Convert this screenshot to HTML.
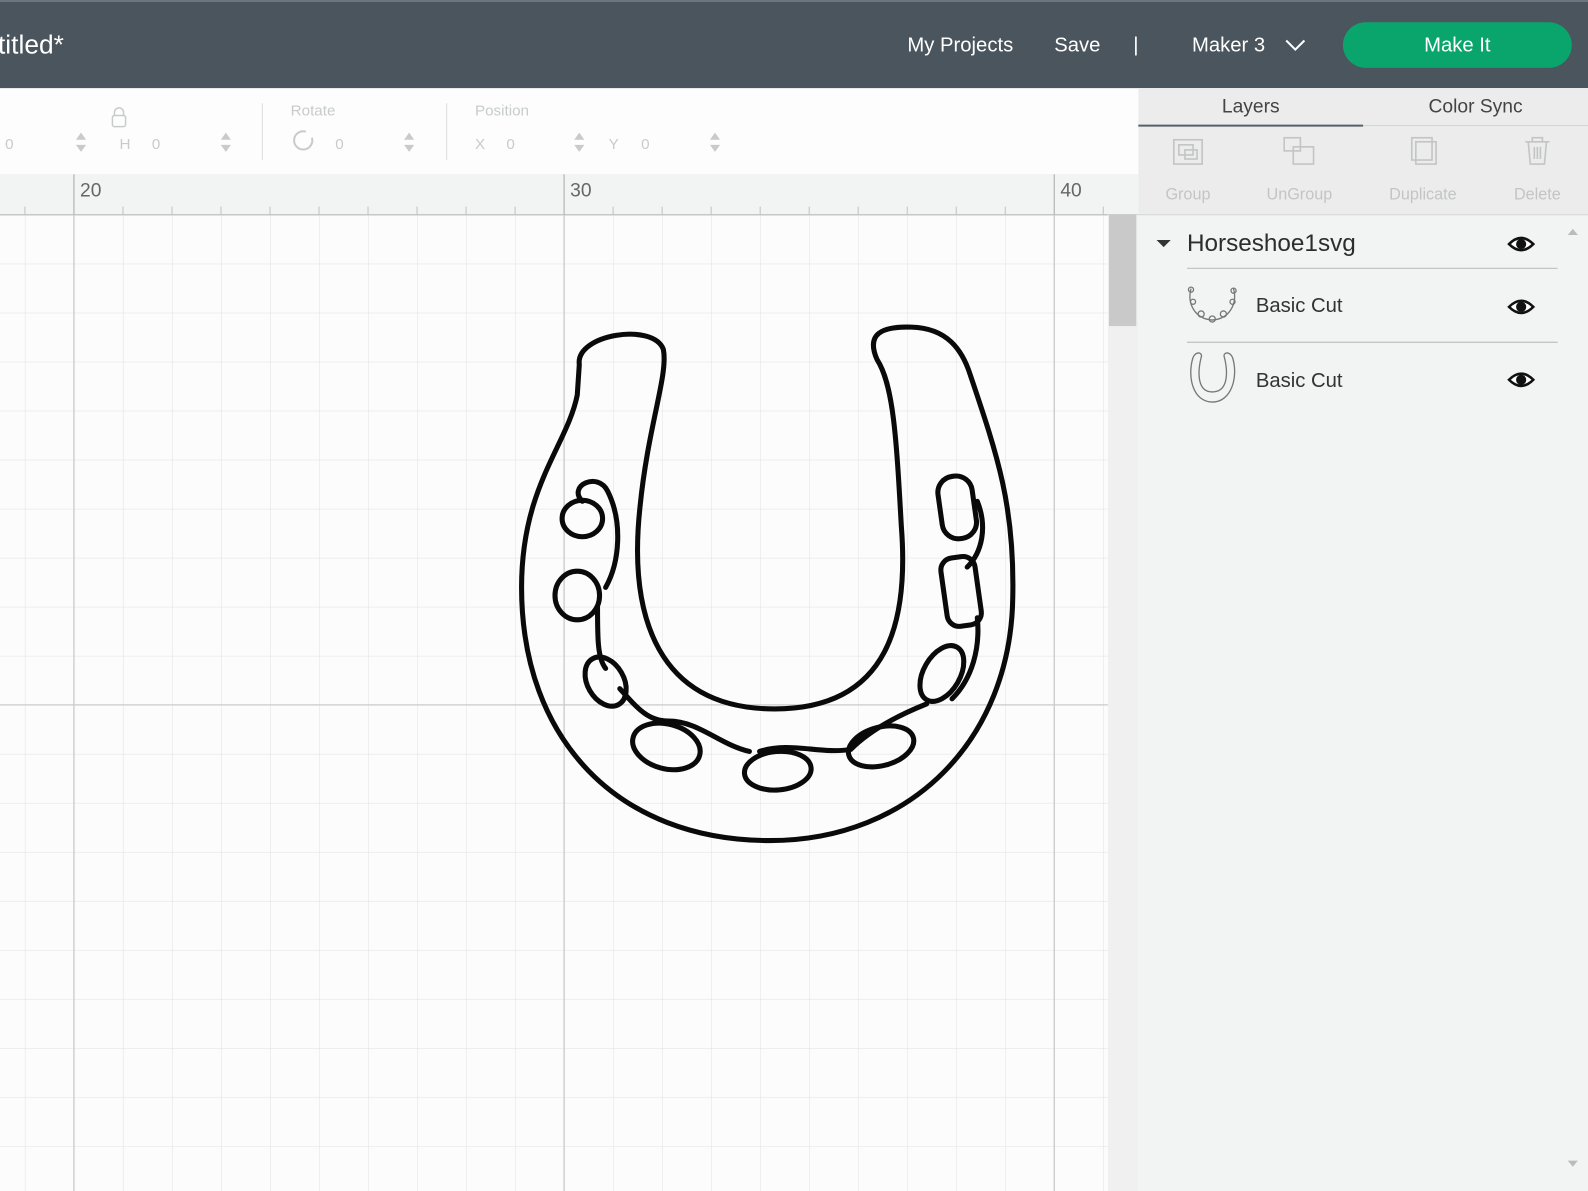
<!DOCTYPE html>
<html><head><meta charset="utf-8"><style>
html,body{margin:0;padding:0;width:1588px;height:1191px;overflow:hidden;background:#fbfcfb}
svg{display:block}
text{font-family:"Liberation Sans",sans-serif}
</style></head><body>
<svg width="1588" height="1191" viewBox="0 0 1568 1176" preserveAspectRatio="none" xmlns="http://www.w3.org/2000/svg">
<defs>
<pattern id="g" x="73" y="212" width="48.4" height="48.4" patternUnits="userSpaceOnUse">
<path d="M0 0V48.4M0 0H48.4" stroke="#dfe2e0" stroke-width="1" fill="none"/>
</pattern>
</defs>
<rect width="1568" height="1176" fill="#fbfcfb"/>
<rect x="0" y="212" width="1094" height="964" fill="url(#g)"/>
<path d="M73 212V1176M557 212V1176M1041 212V1176M0 696H1094" stroke="#c9cccb" stroke-width="1.3"/>
<!-- toolbar -->
<rect x="0" y="87" width="1124" height="85" fill="#fdfdfd"/>
<g fill="#c8cbcb" font-size="15">
<text x="287" y="114">Rotate</text><text x="469" y="114">Position</text>
<text x="118" y="147">H</text><text x="469" y="147">X</text><text x="601" y="147">Y</text>
<text x="5" y="147">0</text><text x="150" y="147">0</text><text x="331" y="147">0</text><text x="500" y="147">0</text><text x="633" y="147">0</text>
</g>
<path d="M259 102V158M441 102V158" stroke="#dcdede"/>
<g fill="#c8cbcb"><path d="M75 138l5-7 5 7zM75 143l5 7 5-7zM218 138l5-7 5 7zM218 143l5 7 5-7zM399 138l5-7 5 7zM399 143l5 7 5-7zM567 138l5-7 5 7zM567 143l5 7 5-7zM701 138l5-7 5 7zM701 143l5 7 5-7z"/></g>
<path d="M308 136a9 9 0 1 1-6-6" stroke="#c8cbcb" stroke-width="2" fill="none"/>
<rect x="111" y="114" width="13" height="11" rx="2" stroke="#c8cbcb" fill="none" stroke-width="1.5"/>
<path d="M113 114v-3a4 4 0 0 1 9 0v3" stroke="#c8cbcb" fill="none" stroke-width="1.5"/>
<!-- ruler -->
<rect x="0" y="172" width="1124" height="40" fill="#f2f3f3"/>
<path d="M0 212H1124" stroke="#c6c8c8" stroke-width="1.5"/>
<path d="M73 172V212M557 172V212M1041 172V212" stroke="#b7baba" stroke-width="1.3"/>
<g stroke="#c0c3c3"><path id="tk" d="M24.6 204V212M121.4 204V212M169.8 204V212M218.2 204V212M266.6 204V212M315 204V212M363.4 204V212M411.8 204V212M460.2 204V212M508.6 204V212M605.4 204V212M653.8 204V212M702.2 204V212M750.6 204V212M799 204V212M847.4 204V212M895.8 204V212M944.2 204V212M992.6 204V212M1089.4 204V212"/></g>
<g fill="#666" font-size="19"><text x="79" y="194">20</text><text x="563" y="194">30</text><text x="1047" y="194">40</text></g>
<!-- scrollbar -->
<rect x="1094" y="212" width="30" height="964" fill="#f0f0f0"/>
<rect x="1095" y="212" width="27" height="110" fill="#c9c9c9"/>
<!-- horseshoe -->
<g fill="none" stroke="#0a0a0a" stroke-width="5" stroke-linejoin="round" stroke-linecap="round">
<path d="M572 360C568 330 645 318 655 345C660 370 640 420 632 500C620 610 650 700 765 700C880 700 897 610 890 520C885 430 882 380 866 355C855 330 870 322 900 323C935 324 950 345 958 370C985 450 1002 500 1000 590C998 730 900 830 760 830C610 830 515 730 515 580C515 480 560 440 570 390Z"/>
<ellipse cx="575" cy="512" rx="20" ry="18"/>
<path d="M575 495C560 480 590 465 600 485C615 515 612 555 598 580"/>
<ellipse cx="570" cy="588" rx="22" ry="24"/>
<path d="M590 600C590 630 590 650 598 660"/>
<ellipse cx="598" cy="673" rx="18" ry="26" transform="rotate(-30 598 673)"/>
<path d="M612 680C630 700 640 712 660 712C690 712 710 735 740 742"/>
<ellipse cx="658" cy="737" rx="34" ry="22" transform="rotate(15 658 737)"/>
<ellipse cx="768" cy="761" rx="33" ry="19" transform="rotate(-5 768 761)"/>
<path d="M750 742C780 732 810 745 840 740C860 720 890 705 915 695"/>
<ellipse cx="870" cy="737" rx="33" ry="19" transform="rotate(-15 870 737)"/>
<ellipse cx="930" cy="665" rx="18" ry="30" transform="rotate(30 930 665)"/>
<path d="M940 690C960 670 968 640 965 610"/>
<rect x="932" y="550" width="34" height="68" rx="12" transform="rotate(-8 949 584)"/>
<rect x="928" y="470" width="34" height="62" rx="16" transform="rotate(-8 945 500)"/>
<path d="M965 495C975 520 970 545 955 560"/>
</g>
<!-- top bar -->
<rect x="0" y="0" width="1568" height="87" fill="#4a555d"/>
<rect x="0" y="0" width="1568" height="2" fill="#6d767c"/>
<g fill="#fff" font-size="20">
<text x="-2" y="53" font-size="26">titled*</text>
<text x="896" y="51">My Projects</text><text x="1041" y="51">Save</text><text x="1119" y="51">|</text><text x="1177" y="51">Maker 3</text>
</g>
<path d="M1270 40l9 9 9-9" stroke="#fff" stroke-width="2" fill="none"/>
<rect x="1326" y="22" width="226" height="45" rx="22.5" fill="#0aa56c"/>
<text x="1439" y="51" fill="#fff" font-size="20" text-anchor="middle">Make It</text>
<!-- right panel -->
<rect x="1124" y="87" width="444" height="125" fill="#ececec"/>
<rect x="1124" y="212" width="444" height="964" fill="#f2f3f3"/>
<path d="M1124 212H1568" stroke="#d4d6d6"/>
<path d="M1124 124H1346" stroke="#55606a" stroke-width="2"/>
<path d="M1346 124H1568" stroke="#d0d2d2"/>
<g fill="#444" font-size="19" text-anchor="middle"><text x="1235" y="111">Layers</text><text x="1457" y="111">Color Sync</text></g>
<g fill="#c3c5c5" font-size="16" text-anchor="middle"><text x="1173" y="197">Group</text><text x="1283" y="197">UnGroup</text><text x="1405" y="197">Duplicate</text><text x="1518" y="197">Delete</text></g>
<g stroke="#c3c5c5" fill="none" stroke-width="1.6">
<rect x="1159" y="138" width="28" height="24"/><rect x="1164" y="143" width="14" height="10"/><rect x="1170" y="148" width="12" height="9"/>
<rect x="1268" y="136" width="16" height="13"/><rect x="1277" y="145" width="20" height="17"/>
<rect x="1394" y="136" width="20" height="22"/><rect x="1398" y="140" width="20" height="22"/>
<path d="M1506 140h24M1513 140v-4h10v4M1509 140l2 22h14l2-22M1515 145v12M1518 145v12M1521 145v12"/>
</g>
<path d="M1548 232l5-6 5 6z" fill="#bbb"/><path d="M1548 1146l5 6 5-6z" fill="#bbb"/>
<path d="M1142 237l7 7 7-7z" fill="#333"/>
<text x="1172" y="248" fill="#2d2d2d" font-size="24">Horseshoe1svg</text>
<path d="M1172 265H1538M1172 338H1538" stroke="#c4c6c6" stroke-width="1.3"/>
<g fill="#333" font-size="20"><text x="1240" y="308">Basic Cut</text><text x="1240" y="382">Basic Cut</text></g>
<g>
<path d="M1490 241q12-12 24 0q-12 12-24 0z" fill="#fff" stroke="#111" stroke-width="2.5"/><circle cx="1502" cy="241" r="5" fill="#111"/>
<path d="M1490 303q12-12 24 0q-12 12-24 0z" fill="#fff" stroke="#111" stroke-width="2.5"/><circle cx="1502" cy="303" r="5" fill="#111"/>
<path d="M1490 375q12-12 24 0q-12 12-24 0z" fill="#fff" stroke="#111" stroke-width="2.5"/><circle cx="1502" cy="375" r="5" fill="#111"/>
</g>
<g fill="none" stroke="#777" stroke-width="1.3">
<path d="M1176 285C1172 300 1180 315 1197 316C1214 315 1222 300 1218 285"/>
<circle cx="1176" cy="286" r="2.5"/><circle cx="1178" cy="298" r="2.5"/><circle cx="1186" cy="310" r="3"/><circle cx="1197" cy="315" r="3"/><circle cx="1208" cy="310" r="3"/><circle cx="1217" cy="298" r="2.5"/><circle cx="1218" cy="287" r="2.5"/>
<path d="M1178 353C1172 372 1178 397 1197 397C1216 397 1223 372 1217 353C1214 346 1207 348 1209 353C1212 365 1214 387 1197 387C1181 387 1183 365 1186 353C1188 348 1181 346 1178 353Z"/>
</g>
</svg>
</body></html>
